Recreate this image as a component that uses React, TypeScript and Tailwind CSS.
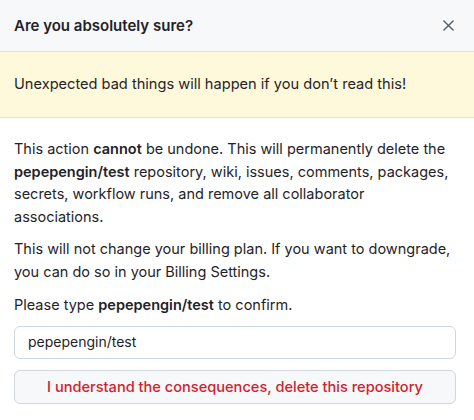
import React from "react";

export default function App() {
  return (
    <div className="w-[474px] h-[420px] bg-white text-[#1f2328] overflow-hidden" style={{ fontFamily: 'Inter, "Liberation Sans", Arial, sans-serif' }}>
      <div className="h-[52px] bg-[#f6f8fa] flex items-center justify-between pl-[14px] pr-[20px] border-b border-[#efe3b4]">
        <h2 className="text-[15px] font-semibold leading-none">Are you absolutely sure?</h2>
        <svg width="11" height="11" viewBox="0 0 12 12" className="text-[#57606a]">
          <path d="M1 1L11 11M11 1L1 11" stroke="currentColor" strokeWidth="1.6" strokeLinecap="round" />
        </svg>
      </div>
      <div className="h-[66px] bg-[#fff9db] border-b border-[#efe3b4] flex items-center px-[14px] text-[14.6px]">
        Unexpected bad things will happen if you don’t read this!
      </div>
      <div className="px-[14px] pt-[20px] text-[14.5px] leading-[22.6px]">
        <div className="pr-[8px] flex flex-col gap-[10px]">
          <p>
            This action <b className="font-semibold">cannot</b> be undone. This will permanently delete the <b className="font-semibold">pepepengin/test</b> repository, wiki, issues, comments, packages, secrets, workflow runs, and remove all collaborator associations.
          </p>
          <p>
            This will not change your billing plan. If you want to downgrade, you can do so in your Billing Settings.
          </p>
          <p>
            Please type <b className="font-semibold">pepepengin/test</b> to confirm.
          </p>
        </div>
        <div className="mt-[10px] h-[33px] w-[442px] border border-[#d0d7de] rounded-[6px] flex items-center px-[13px] text-[14px]">
          pepepengin/test
        </div>
        <button className="mt-[11px] h-[34px] w-[442px] border border-[#d0d7de] rounded-[6px] bg-[#f6f8fa] text-[#cf222e] font-medium text-[14.6px] flex items-center justify-center">
          I understand the consequences, delete this repository
        </button>
      </div>
    </div>
  );
}
